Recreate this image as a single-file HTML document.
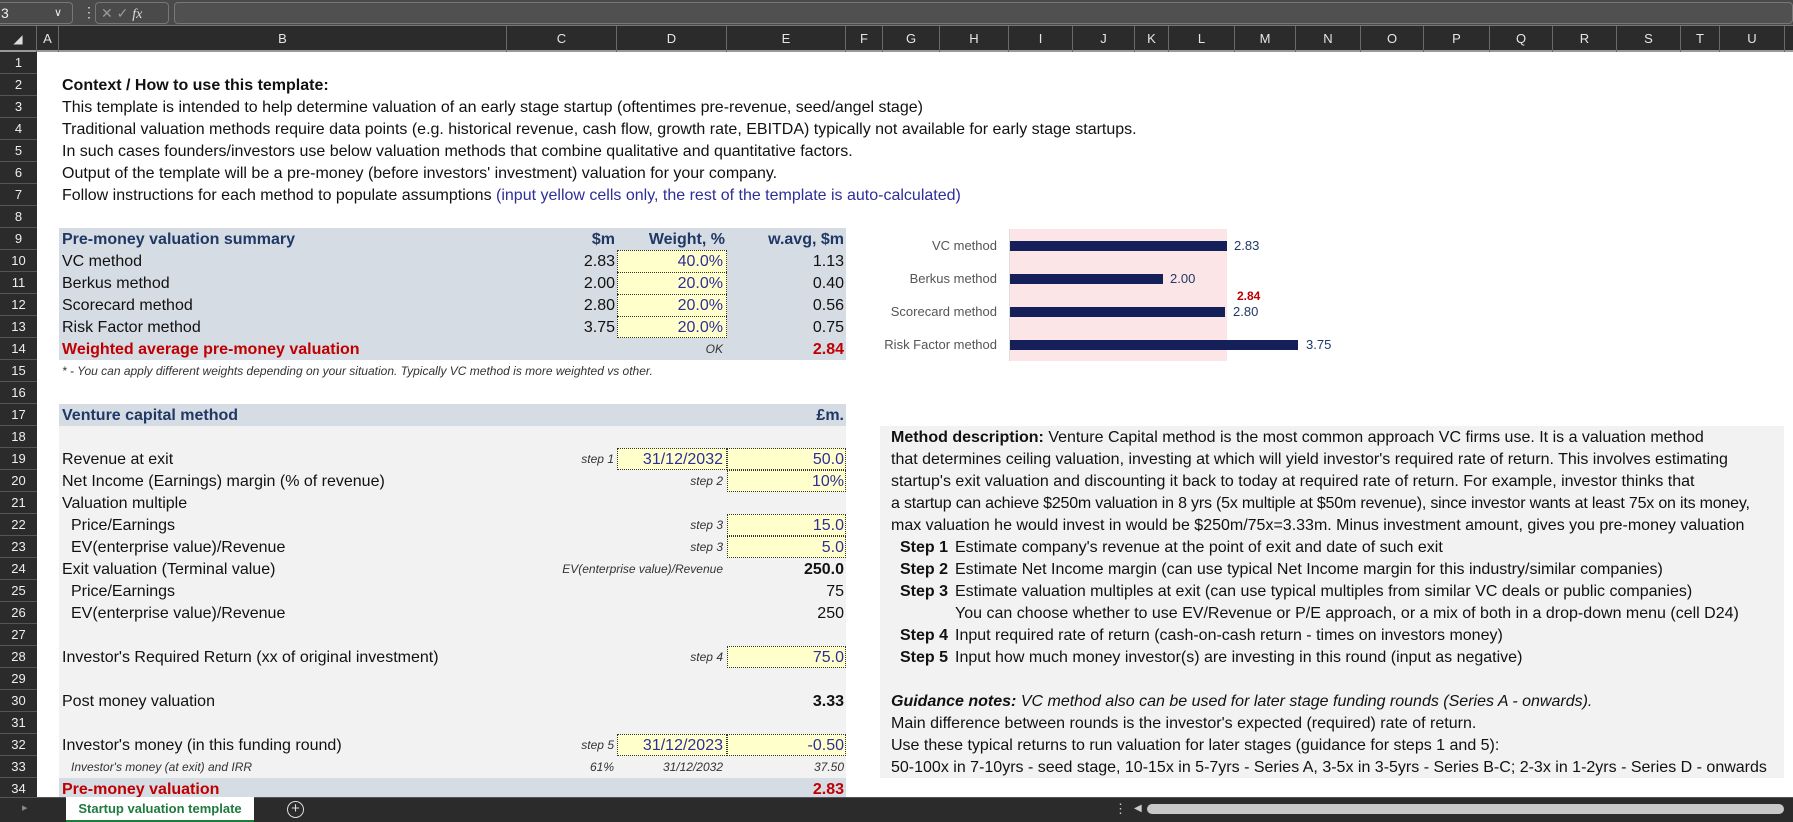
<!DOCTYPE html>
<html><head><meta charset="utf-8"><style>
*{margin:0;padding:0;box-sizing:border-box}
body{width:1793px;height:822px;overflow:hidden;background:#fff;font-family:"Liberation Sans",sans-serif;position:relative;color:#111}
.a{position:absolute;white-space:nowrap}
.t{position:absolute;white-space:nowrap;height:22px;line-height:23px;font-size:16px}
.r{text-align:right}
.hd{position:absolute;top:26px;height:26px;line-height:26px;color:#e6e6e6;font-size:13px;text-align:center;border-right:1px solid #6a6a6a}
.rh{position:absolute;left:0;width:37px;height:22px;line-height:22px;color:#eee;font-size:13px;text-align:center;background:#2b2b2b;border-bottom:1px solid #555}
.y{position:absolute;background:#ffffcc;border:1px dotted #333;height:22px}
.nv{color:#1f3864;font-weight:bold}
.bl{color:#2e2e9a}
.red{color:#c00000;font-weight:bold}
.it{font-style:italic;font-size:12px;color:#333}
.bar{position:absolute;left:1010px;height:10px;background:#15205a}
.cl{position:absolute;font-size:13px;color:#555;text-align:right;width:140px;left:857px}
.cv{position:absolute;font-size:13px;color:#1f3864}
.st{font-weight:bold;display:inline-block;width:64px;padding-left:9px}
</style></head><body>
<div class="a" style="left:0;top:0;width:1793px;height:26px;background:#4a4a4a;border-bottom:1px solid #777"></div>
<div class="a" style="left:0;top:2px;width:73px;height:22px;border:1px solid #777;border-left:none;border-radius:0 4px 4px 0;color:#eee;font-size:14px;line-height:20px;padding-left:1px">3<span style="position:absolute;left:54px;font-size:11px">&#8744;</span></div>
<div class="a" style="left:82px;top:4px;color:#ddd;font-size:14px">&#8942;</div>
<div class="a" style="left:95px;top:2px;width:74px;height:22px;border:1px solid #777;border-radius:4px;color:#999;font-size:14px;line-height:20px;padding-left:5px">&#10005; &#10003; <i style="font-family:'Liberation Serif',serif;color:#ddd">fx</i></div>
<div class="a" style="left:174px;top:2px;width:1619px;height:22px;border:1px solid #777;border-radius:4px;background:#505050"></div>
<div class="a" style="left:0;top:26px;width:1793px;height:26px;background:#2b2b2b;border-bottom:2px solid #999"></div>
<div class="hd" style="left:0;width:37px"><span style="color:#ddd;font-size:12px">&#9698;</span></div>
<div class="hd" style="left:37px;width:22px">A</div>
<div class="hd" style="left:59px;width:448px">B</div>
<div class="hd" style="left:507px;width:110px">C</div>
<div class="hd" style="left:617px;width:110px">D</div>
<div class="hd" style="left:727px;width:119px">E</div>
<div class="hd" style="left:846px;width:37px">F</div>
<div class="hd" style="left:883px;width:57px">G</div>
<div class="hd" style="left:940px;width:69px">H</div>
<div class="hd" style="left:1009px;width:64px">I</div>
<div class="hd" style="left:1073px;width:62px">J</div>
<div class="hd" style="left:1135px;width:34px">K</div>
<div class="hd" style="left:1169px;width:66px">L</div>
<div class="hd" style="left:1235px;width:61px">M</div>
<div class="hd" style="left:1296px;width:65px">N</div>
<div class="hd" style="left:1361px;width:63px">O</div>
<div class="hd" style="left:1424px;width:66px">P</div>
<div class="hd" style="left:1490px;width:63px">Q</div>
<div class="hd" style="left:1553px;width:64px">R</div>
<div class="hd" style="left:1617px;width:64px">S</div>
<div class="hd" style="left:1681px;width:39px">T</div>
<div class="hd" style="left:1720px;width:65px">U</div>
<div class="a" style="left:0;top:52px;width:37px;height:770px;background:#2b2b2b"></div>
<div class="rh" style="top:52px">1</div><div class="rh" style="top:74px">2</div><div class="rh" style="top:96px">3</div><div class="rh" style="top:118px">4</div><div class="rh" style="top:140px">5</div><div class="rh" style="top:162px">6</div><div class="rh" style="top:184px">7</div><div class="rh" style="top:206px">8</div><div class="rh" style="top:228px">9</div><div class="rh" style="top:250px">10</div><div class="rh" style="top:272px">11</div><div class="rh" style="top:294px">12</div><div class="rh" style="top:316px">13</div><div class="rh" style="top:338px">14</div><div class="rh" style="top:360px">15</div><div class="rh" style="top:382px">16</div><div class="rh" style="top:404px">17</div><div class="rh" style="top:426px">18</div><div class="rh" style="top:448px">19</div><div class="rh" style="top:470px">20</div><div class="rh" style="top:492px">21</div><div class="rh" style="top:514px">22</div><div class="rh" style="top:536px">23</div><div class="rh" style="top:558px">24</div><div class="rh" style="top:580px">25</div><div class="rh" style="top:602px">26</div><div class="rh" style="top:624px">27</div><div class="rh" style="top:646px">28</div><div class="rh" style="top:668px">29</div><div class="rh" style="top:690px">30</div><div class="rh" style="top:712px">31</div><div class="rh" style="top:734px">32</div><div class="rh" style="top:756px">33</div><div class="rh" style="top:778px">34</div>

<div class="t" style="left:62px;top:74px;font-weight:bold">Context / How to use this template:</div>
<div class="t" style="left:62px;top:96px">This template is intended to help determine valuation of an early stage startup (oftentimes pre-revenue, seed/angel stage)</div>
<div class="t" style="left:62px;top:118px">Traditional valuation methods require data points (e.g. historical revenue, cash flow, growth rate, EBITDA) typically not available for early stage startups.</div>
<div class="t" style="left:62px;top:140px">In such cases founders/investors use below valuation methods that combine qualitative and quantitative factors.</div>
<div class="t" style="left:62px;top:162px">Output of the template will be a pre-money (before investors' investment) valuation for your company.</div>
<div class="t" style="left:62px;top:184px">Follow instructions for each method to populate assumptions <span class="bl">(input yellow cells only, the rest of the template is auto-calculated)</span></div>

<div class="a" style="left:59px;top:228px;width:787px;height:132px;background:#d6dce4"></div>
<div class="y" style="left:617px;top:250px;width:110px;height:88px;border:1px dotted #333"></div>
<div class="a" style="left:617px;top:272px;width:110px;border-top:1px dotted #333"></div>
<div class="a" style="left:617px;top:294px;width:110px;border-top:1px dotted #333"></div>
<div class="a" style="left:617px;top:316px;width:110px;border-top:1px dotted #333"></div>
<div class="t nv" style="left:62px;top:228px">Pre-money valuation summary</div>
<div class="t nv r" style="left:507px;width:108px;top:228px">$m</div>
<div class="t nv r" style="left:617px;width:108px;top:228px">Weight, %</div>
<div class="t nv r" style="left:727px;width:117px;top:228px">w.avg, $m</div>
<div class="t" style="left:62px;top:250px">VC method</div>
<div class="t" style="left:62px;top:272px">Berkus method</div>
<div class="t" style="left:62px;top:294px">Scorecard method</div>
<div class="t" style="left:62px;top:316px">Risk Factor method</div>
<div class="t red" style="left:62px;top:338px">Weighted average pre-money valuation</div>
<div class="t r" style="left:507px;width:108px;top:250px">2.83</div>
<div class="t r" style="left:507px;width:108px;top:272px">2.00</div>
<div class="t r" style="left:507px;width:108px;top:294px">2.80</div>
<div class="t r" style="left:507px;width:108px;top:316px">3.75</div>
<div class="t r bl" style="left:617px;width:106px;top:250px">40.0%</div>
<div class="t r bl" style="left:617px;width:106px;top:272px">20.0%</div>
<div class="t r bl" style="left:617px;width:106px;top:294px">20.0%</div>
<div class="t r bl" style="left:617px;width:106px;top:316px">20.0%</div>
<div class="t r" style="left:617px;width:106px;top:338px;font-size:12px;font-style:italic;color:#333">OK</div>
<div class="t r" style="left:727px;width:117px;top:250px">1.13</div>
<div class="t r" style="left:727px;width:117px;top:272px">0.40</div>
<div class="t r" style="left:727px;width:117px;top:294px">0.56</div>
<div class="t r" style="left:727px;width:117px;top:316px">0.75</div>
<div class="t r red" style="left:727px;width:117px;top:338px">2.84</div>
<div class="t it" style="left:62px;top:360px">* - You can apply different weights depending on your situation. Typically VC method is more weighted vs other.</div>

<div class="a" style="left:1009px;top:229px;width:218px;height:132px;background:#fbe5e6;border-left:1px solid #ddd"></div>
<div class="bar" style="top:241px;width:217px"></div>
<div class="bar" style="top:274px;width:153px"></div>
<div class="bar" style="top:307px;width:215px"></div>
<div class="bar" style="top:340px;width:288px"></div>
<div class="cl" style="top:238px">VC method</div>
<div class="cl" style="top:271px">Berkus method</div>
<div class="cl" style="top:304px">Scorecard method</div>
<div class="cl" style="top:337px">Risk Factor method</div>
<div class="cv" style="left:1234px;top:238px">2.83</div>
<div class="cv" style="left:1170px;top:271px">2.00</div>
<div class="cv" style="left:1233px;top:304px">2.80</div>
<div class="cv" style="left:1306px;top:337px">3.75</div>
<div class="a" style="left:1237px;top:289px;font-size:12px;color:#c00000;font-weight:bold">2.84</div>

<div class="a" style="left:59px;top:404px;width:787px;height:22px;background:#d6dce4"></div>
<div class="a" style="left:59px;top:426px;width:787px;height:352px;background:#f2f2f2"></div>
<div class="a" style="left:59px;top:778px;width:787px;height:22px;background:#d6dce4"></div>
<div class="t nv" style="left:62px;top:404px">Venture capital method</div>
<div class="t nv r" style="left:727px;width:117px;top:404px">£m.</div>
<div class="y" style="left:617px;top:448px;width:110px"></div>
<div class="y" style="left:727px;top:448px;width:119px"></div>
<div class="y" style="left:727px;top:470px;width:119px"></div>
<div class="y" style="left:727px;top:514px;width:119px"></div>
<div class="y" style="left:727px;top:536px;width:119px"></div>
<div class="y" style="left:727px;top:646px;width:119px"></div>
<div class="y" style="left:617px;top:734px;width:110px"></div>
<div class="y" style="left:727px;top:734px;width:119px"></div>
<div class="t" style="left:62px;top:448px">Revenue at exit</div>
<div class="t" style="left:62px;top:470px">Net Income (Earnings) margin (% of revenue)</div>
<div class="t" style="left:62px;top:492px">Valuation multiple</div>
<div class="t" style="left:71px;top:514px">Price/Earnings</div>
<div class="t" style="left:71px;top:536px">EV(enterprise value)/Revenue</div>
<div class="t" style="left:62px;top:558px">Exit valuation (Terminal value)</div>
<div class="t" style="left:71px;top:580px">Price/Earnings</div>
<div class="t" style="left:71px;top:602px">EV(enterprise value)/Revenue</div>
<div class="t" style="left:62px;top:646px">Investor's Required Return (xx of original investment)</div>
<div class="t" style="left:62px;top:690px">Post money valuation</div>
<div class="t" style="left:62px;top:734px">Investor's money (in this funding round)</div>
<div class="t it bl" style="left:71px;top:756px">Investor's money (at exit) and IRR</div>
<div class="t red" style="left:62px;top:778px">Pre-money valuation</div>
<div class="t it r" style="left:507px;width:107px;top:448px">step 1</div>
<div class="t it r" style="left:617px;width:106px;top:470px">step 2</div>
<div class="t it r" style="left:617px;width:106px;top:514px">step 3</div>
<div class="t it r" style="left:617px;width:106px;top:536px">step 3</div>
<div class="t it r" style="left:450px;width:273px;top:558px">EV(enterprise value)/Revenue</div>
<div class="t it r" style="left:617px;width:106px;top:646px">step 4</div>
<div class="t it r" style="left:507px;width:107px;top:734px">step 5</div>
<div class="t it r bl" style="left:507px;width:107px;top:756px">61%</div>
<div class="t it r bl" style="left:617px;width:106px;top:756px">31/12/2032</div>
<div class="t it r bl" style="left:727px;width:117px;top:756px">37.50</div>
<div class="t r bl" style="left:617px;width:106px;top:448px">31/12/2032</div>
<div class="t r bl" style="left:617px;width:106px;top:734px">31/12/2023</div>
<div class="t r bl" style="left:727px;width:117px;top:448px">50.0</div>
<div class="t r bl" style="left:727px;width:117px;top:470px">10%</div>
<div class="t r bl" style="left:727px;width:117px;top:514px">15.0</div>
<div class="t r bl" style="left:727px;width:117px;top:536px">5.0</div>
<div class="t r" style="left:727px;width:117px;top:558px;font-weight:bold">250.0</div>
<div class="t r" style="left:727px;width:117px;top:580px">75</div>
<div class="t r" style="left:727px;width:117px;top:602px">250</div>
<div class="t r bl" style="left:727px;width:117px;top:646px">75.0</div>
<div class="t r" style="left:727px;width:117px;top:690px;font-weight:bold">3.33</div>
<div class="t r bl" style="left:727px;width:117px;top:734px">-0.50</div>
<div class="t r red" style="left:727px;width:117px;top:778px">2.83</div>

<div class="a" style="left:880px;top:426px;width:904px;height:352px;background:#f2f2f2"></div>
<div class="t" style="left:891px;top:426px"><b>Method description:</b> Venture Capital method is the most common approach VC firms use. It is a valuation method</div>
<div class="t" style="left:891px;top:448px">that determines ceiling valuation, investing at which will yield investor's required rate of return. This involves estimating</div>
<div class="t" style="left:891px;top:470px">startup's exit valuation and discounting it back to today at required rate of return. For example, investor thinks that</div>
<div class="t" style="left:891px;top:492px;letter-spacing:-0.2px">a startup can achieve $250m valuation in 8 yrs (5x multiple at $50m revenue), since investor wants at least 75x on its money,</div>
<div class="t" style="left:891px;top:514px">max valuation he would invest in would be $250m/75x=3.33m. Minus investment amount, gives you pre-money valuation</div>
<div class="t" style="left:891px;top:536px"><span class="st">Step 1</span>Estimate company's revenue at the point of exit and date of such exit</div>
<div class="t" style="left:891px;top:558px"><span class="st">Step 2</span>Estimate Net Income margin (can use typical Net Income margin for this industry/similar companies)</div>
<div class="t" style="left:891px;top:580px"><span class="st">Step 3</span>Estimate valuation multiples at exit (can use typical multiples from similar VC deals or public companies)</div>
<div class="t" style="left:891px;top:602px"><span class="st"></span>You can choose whether to use EV/Revenue or P/E approach, or a mix of both in a drop-down menu (cell D24)</div>
<div class="t" style="left:891px;top:624px"><span class="st">Step 4</span>Input required rate of return (cash-on-cash return - times on investors money)</div>
<div class="t" style="left:891px;top:646px"><span class="st">Step 5</span>Input how much money investor(s) are investing in this round (input as negative)</div>
<div class="t" style="left:891px;top:690px"><b><i>Guidance notes:</i></b> <i>VC method also can be used for later stage funding rounds (Series A - onwards).</i></div>
<div class="t" style="left:891px;top:712px">Main difference between rounds is the investor's expected (required) rate of return.</div>
<div class="t" style="left:891px;top:734px">Use these typical returns to run valuation for later stages (guidance for steps 1 and 5):</div>
<div class="t" style="left:891px;top:756px">50-100x in 7-10yrs - seed stage, 10-15x in 5-7yrs - Series A, 3-5x in 3-5yrs - Series B-C; 2-3x in 1-2yrs - Series D - onwards</div>

<div class="a" style="left:0;top:797px;width:1793px;height:25px;background:#2b2b2b;border-top:1px solid #555"></div>
<div class="a" style="left:22px;top:801px;color:#888;font-size:11px">&#9656;</div>
<div class="a" style="left:66px;top:797px;width:188px;height:25px;background:#fff;border-bottom:2px solid #1e7a3e;color:#1e7a3e;font-weight:bold;font-size:13px;line-height:23px;text-align:center">Startup valuation template</div>
<div class="a" style="left:287px;top:801px;width:17px;height:17px;border:1.5px solid #ddd;border-radius:50%;color:#ddd;font-size:15px;line-height:14px;text-align:center">+</div>
<div class="a" style="left:1114px;top:801px;color:#ccc;font-size:13px">&#8942;</div>
<div class="a" style="left:1134px;top:803px;color:#ccc;font-size:10px">&#9664;</div>
<div class="a" style="left:1147px;top:804px;width:637px;height:10px;background:#c8c8c8;border-radius:5px"></div>
</body></html>
